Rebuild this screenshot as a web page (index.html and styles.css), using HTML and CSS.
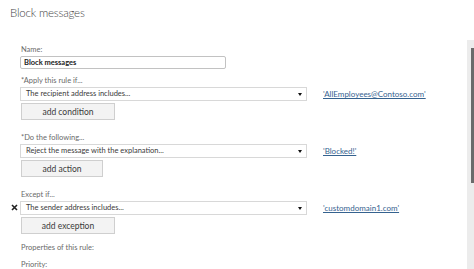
FILE: index.html
```html
<!DOCTYPE html>
<html lang="en">
<head>
<meta charset="UTF-8" />
<title>Block messages</title>
<link rel="stylesheet" href="styles.css">
</head>
<body>
<div class="page">
  <div class="content">
    <h1 class="title">Block messages</h1>

    <div class="form">
      <label class="lbl">Name:</label>
      <input class="name-input" type="text" value="Block messages" />

      <label class="lbl apply">*Apply this rule if...</label>
      <div class="row">
        <div class="select">The recipient address includes...<span class="arrow"></span></div>
        <a class="value" href="#">'AllEmployees@Contoso.com'</a>
      </div>
      <button class="btn">add condition</button>

      <label class="lbl section">*Do the following...</label>
      <div class="row">
        <div class="select">Reject the message with the explanation...<span class="arrow"></span></div>
        <a class="value" href="#">'Blocked!'</a>
      </div>
      <button class="btn btn-short">add action</button>

      <label class="lbl section">Except if...</label>
      <div class="row">
        <span class="remove">
          <svg width="7" height="7" viewBox="0 0 7 7"><path d="M1 1L6 6M6 1L1 6" stroke="#222" stroke-width="1.6"/></svg>
        </span>
        <div class="select">The sender address includes...<span class="arrow"></span></div>
        <a class="value" href="#">'customdomain1.com'</a>
      </div>
      <button class="btn">add exception</button>

      <label class="lbl props">Properties of this rule:</label>
      <label class="lbl prio">Priority:</label>
    </div>
  </div>

  <div class="scrollbar">
    <div class="thumb"></div>
  </div>
</div>
</body>
</html>
```

FILE: styles.css
```css
* {
  margin: 0; padding: 0; box-sizing: border-box;
}
body {
  background: #fff;
  font-family: Lato, 'Liberation Sans', sans-serif;
  color: #333;
  overflow: hidden;
}
.page {
  display: flex;
  height: 269px;
}
.content {
  flex: 1;
}
.title {
  font-size: 11.5px;
  font-weight: 300;
  line-height: 16px;
  color: #444;
  padding: 5px 0 0 10px;
  letter-spacing: -0.2px;
}
.form {
  padding-left: 20px;
  margin-top: 24px;
  display: flex;
  flex-direction: column;
  align-items: flex-start;
}
.lbl {
  display: block;
  font-size: 7.5px;
  line-height: 10px;
  color: #6a6a6a;
  margin-bottom: 1px;
  padding-left: 1px;
}
.lbl.apply {
  margin-top: 7px;
}
.lbl.section {
  margin-top: 13px;
}
.lbl.props {
  margin-top: 9px;
}
.lbl.prio {
  margin-top: 6px;
}
.name-input {
  width: 206px;
  height: 13px;
  border: 1px solid #c2c2c2;
  border-radius: 2px;
  font-family: inherit;
  font-size: 7.5px;
  font-weight: 700;
  color: #222;
  padding: 0 3px;
  outline: none;
}
.row {
  display: flex;
  align-items: center;
  position: relative;
}
.select {
  width: 287px;
  height: 14px;
  border: 1px solid #d8d8d8;
  font-size: 7.5px;
  line-height: 12px;
  color: #3a3a3a;
  padding-left: 5px;
  position: relative;
}
.arrow {
  position: absolute;
  right: 4px;
  top: 5px;
  border-left: 2.5px solid transparent;
  border-right: 2.5px solid transparent;
  border-top: 3px solid #111;
}
.remove {
  position: absolute;
  left: -9px;
  top: 3px;
  width: 7px;
  height: 7px;
  display: flex;
}
.value {
  margin-left: 16px;
  font-size: 8px;
  color: #35628f;
  text-decoration: underline;
}
.btn {
  margin-top: 2px;
  width: 94px;
  height: 17px;
  background: #f3f3f3;
  border: 1px solid #cfcfcf;
  font-family: inherit;
  font-size: 8.5px;
  color: #3a3a3a;
  margin-left: 1px;
}
.btn-short {
  width: 82px;
}
.scrollbar {
  width: 7px;
  margin-top: 40px;
  background: #ececec;
  display: flex;
  justify-content: flex-end;
}
.thumb {
  width: 3px;
  height: 135px;
  margin-top: 8px;
  background: #6b6b6b;
}
```
